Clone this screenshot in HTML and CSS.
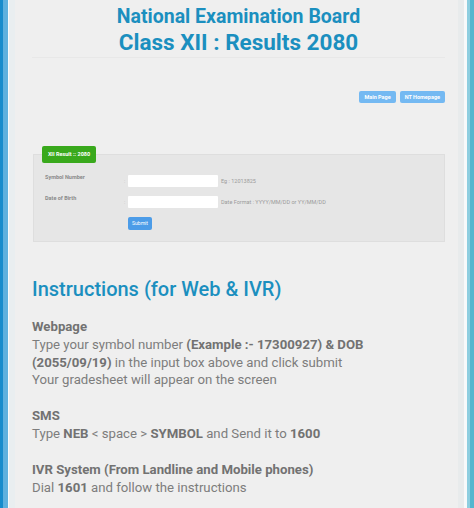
FILE: index.html
```html
<!DOCTYPE html>
<html>
<head>
<meta charset="utf-8">
<link rel="stylesheet" href="styles.css">
</head>
<body>
<div class="frame">
  <header class="head">
    <h1 class="t1">National Examination Board</h1>
    <h2 class="t2">Class XII : Results 2080</h2>
  </header>
  <div class="rule"></div>
  <nav class="links">
    <a class="lbtn">Main Page</a>
    <a class="lbtn">NT Homepage</a>
  </nav>
  <fieldset class="panel">
    <legend class="legend">XII Result :: 2080</legend>
    <div class="row">
      <span class="lbl">Symbol Number</span>
      <span class="colon">:</span>
      <span class="inp"></span>
      <span class="hint">Eg : 12013825</span>
    </div>
    <div class="row">
      <span class="lbl">Date of Birth</span>
      <span class="colon">:</span>
      <span class="inp"></span>
      <span class="hint">Date Format : YYYY/MM/DD or YY/MM/DD</span>
    </div>
    <div class="row">
      <span class="lbl"></span>
      <span class="colon"></span>
      <span class="submit">Submit</span>
    </div>
  </fieldset>
  <section class="instr">
    <h3 class="ih">Instructions (for Web &amp; IVR)</h3>
    <p class="para"><b>Webpage</b><br>Type your symbol number <b>(Example :- 17300927) &amp; DOB (2055/09/19)</b> in the input box above and click submit<br>Your gradesheet will appear on the screen</p>
    <p class="para"><b>SMS</b><br>Type <b>NEB</b> &lt; space &gt; <b>SYMBOL</b> and Send it to <b>1600</b></p>
    <p class="para"><b>IVR System (From Landline and Mobile phones)</b><br>Dial <b>1601</b> and follow the instructions</p>
  </section>
</div>
</body>
</html>
```
FILE: styles.css
```css
html, body { margin: 0; padding: 0; }
body {
  background: #efefef;
  font-family: Roboto, "Liberation Sans", sans-serif;
  width: 474px;
  height: 508px;
  overflow: hidden;
}
.frame {
  height: 508px;
  box-sizing: border-box;
  padding: 0 29px 0 32px;
  background: #efefef;
  box-shadow:
    inset 3px 0 #168bcc,
    inset 8px 0 #5db0de,
    inset 9px 0 #f6fbfd,
    inset 15px 0 #e9eef0,
    inset -4px 0 #55b6ce,
    inset -7px 0 #8dcee0,
    inset -10px 0 #f7f9fa,
    inset -16px 0 #e8ebec;
}
.head { text-align: center; padding-top: 6px; }
.t1 {
  margin: 0;
  font-size: 19.5px;
  line-height: 22px;
  font-weight: 700;
  color: #1b8fbf;
}
.t2 {
  margin: 0;
  font-size: 22.5px;
  line-height: 28px;
  font-weight: 700;
  color: #1b8fbf;
}
.rule {
  height: 1px;
  background: #e8e8e8;
  margin-top: 1px;
}
.links {
  display: flex;
  justify-content: flex-end;
  gap: 4px;
  margin-top: 33px;
}
.lbtn {
  display: block;
  background: #74b9f2;
  color: #fff;
  font-size: 5.5px;
  font-weight: 700;
  line-height: 12px;
  height: 12px;
  padding: 0 5px;
  border-radius: 2px;
}
.panel {
  margin: 51px 0 0 1px;
  padding: 20px 0 11px 11px;
  background: #e6e6e6;
  border: 1px solid #dedede;
  min-width: 0;
  position: relative;
}
.legend {
  position: absolute;
  left: 8px;
  top: -9px;
  width: 54px;
  height: 17px;
  box-sizing: border-box;
  padding: 0;
  background: #39a91c;
  color: #fff;
  font-size: 5.5px;
  font-weight: 700;
  line-height: 17px;
  text-align: center;
  border-radius: 2px;
}
.row {
  display: flex;
  align-items: center;
  height: 12px;
  margin-bottom: 9px;
}
.row:last-child { margin-bottom: 0; height: 13px; }
.lbl {
  width: 79px;
  font-size: 5.5px;
  font-weight: 700;
  color: #8a8a8a;
  align-self: flex-start;
  margin-top: -1px;
}
.colon {
  width: 4px;
  font-size: 5px;
  color: #bbb;
}
.inp {
  width: 90px;
  height: 12px;
  background: #fff;
  border-radius: 1px;
}
.hint {
  margin-left: 3px;
  font-size: 5.5px;
  color: #9b9b9b;
}
.submit {
  display: block;
  width: 24px;
  height: 13px;
  line-height: 13px;
  background: #4c9ce8;
  color: #fff;
  font-size: 5px;
  text-align: center;
  border-radius: 2px;
}
.instr { margin-top: 35px; }
.ih {
  margin: 0;
  font-size: 20px;
  line-height: 24px;
  font-weight: 500;
  color: #1b8fbf;
}
.para {
  margin: 0;
  margin-top: 18px;
  font-size: 13.2px;
  line-height: 17.8px;
  color: #7d7d7d;
  width: 355px;
}
.para:first-of-type { margin-top: 17px; }
.para b { font-weight: 700; color: #727272; }
```
